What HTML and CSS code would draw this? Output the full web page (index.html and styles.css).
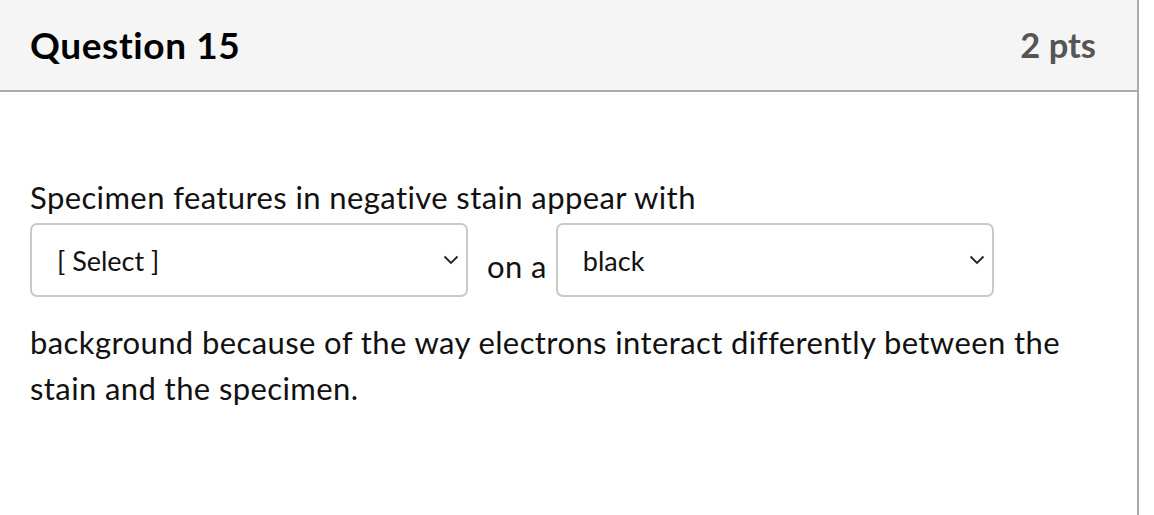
FILE: index.html
```html
<!DOCTYPE html>
<html lang="en">
<head>
<meta charset="utf-8">
<title>Question 15</title>
<link rel="stylesheet" href="styles.css">
</head>
<body>
<div class="question">
  <div class="q-header">
    <h2 class="q-title">Question 15</h2>
    <span class="q-points">2 pts</span>
  </div>
  <div class="q-body">
    <p class="q-text first">Specimen features in negative stain appear with</p>
    <div class="select-row">
      <div class="select">
        <span class="select-value">[ Select ]</span>
        <svg class="chev" width="16" height="10" viewBox="0 0 16 10"><path d="M1.5 1.5 L8 8 L14.5 1.5" fill="none" stroke="#222" stroke-width="1.8"/></svg>
      </div>
      <span class="on-a">on a</span>
      <div class="select">
        <span class="select-value">black</span>
        <svg class="chev" width="16" height="10" viewBox="0 0 16 10"><path d="M1.5 1.5 L8 8 L14.5 1.5" fill="none" stroke="#222" stroke-width="1.8"/></svg>
      </div>
    </div>
    <p class="q-text rest">background because of the way electrons interact differently between the stain and the specimen.</p>
  </div>
</div>
</body>
</html>
```

FILE: styles.css
```css
html, body {
  margin: 0;
  padding: 0;
  background: #ffffff;
}

body {
  font-family: Lato, "Open Sans", "Liberation Sans", sans-serif;
  color: #111111;
}

.question {
  width: 1137px;
  min-height: 515px;
  border-right: 2px solid #aaaaaa;
  box-sizing: content-box;
}

.q-header {
  height: 90px;
  background: #f5f5f5;
  border-bottom: 2px solid #aaaaaa;
  display: flex;
  align-items: center;
  justify-content: space-between;
  padding: 0 41px 0 30px;
}

.q-title {
  margin: 0;
  font-size: 37px;
  font-weight: 700;
  letter-spacing: 0.6px;
  color: #000000;
  line-height: 1.2;
}

.q-points {
  font-size: 34.5px;
  font-weight: 700;
  color: #555555;
  line-height: 1.2;
}

.q-body {
  padding: 82px 40px 0 30px;
}

.q-text {
  margin: 0;
  font-size: 31px;
  letter-spacing: 0.4px;
  line-height: 46px;
}

.select-row {
  display: flex;
  align-items: flex-end;
  margin-top: 3px;
}

.select {
  width: 438px;
  height: 74px;
  box-sizing: border-box;
  border: 2px solid #c9c9c9;
  border-radius: 7px;
  background: #ffffff;
  display: flex;
  align-items: center;
  justify-content: space-between;
  padding: 0 7px 0 25px;
  font-size: 27px;
  color: #111111;
}

.select-value {
  line-height: 1;
  margin-top: 1px;
}

.chev {
  display: block;
  flex: none;
}

.on-a {
  font-size: 31px;
  letter-spacing: 0.4px;
  line-height: 1;
  margin: 0 9px 15px 19px;
}

.q-text.rest {
  margin-top: 22px;
}
```
